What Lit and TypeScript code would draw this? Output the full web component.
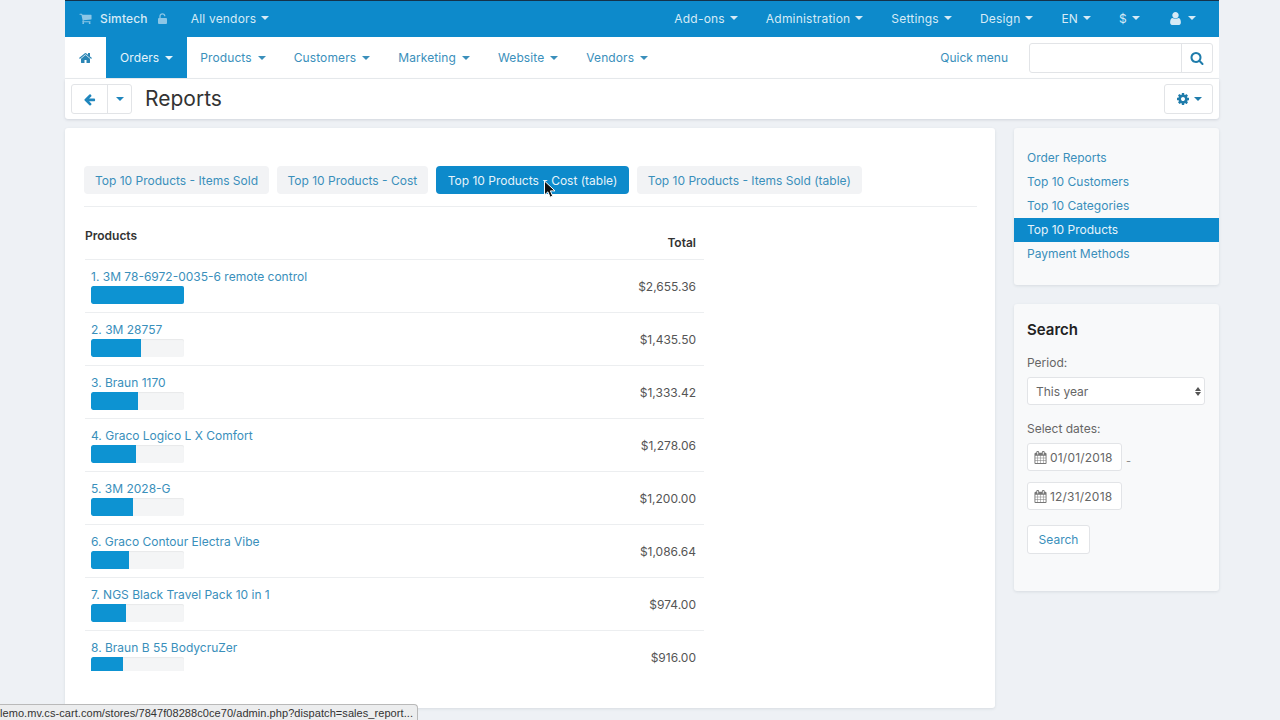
import { LitElement, html, css, svg } from "lit";
import { customElement } from "lit/decorators.js";

const ICONS: Record<string, string> = {
  home: "M1408 992v480q0 26-19 45t-45 19h-384v-384h-256v384h-384q-26 0-45-19t-19-45v-480q0-1 .5-3t.5-3l575-474 575 474q1 2 1 6zm223-69l-62 74q-8 9-21 11h-3q-13 0-21-7l-692-577-692 577q-12 8-24 7-13-2-21-11l-62-74q-8-10-7-23.5t11-21.5l719-599q32-26 76-26t76 26l244 204v-195q0-14 9-23t23-9h192q14 0 23 9t9 23v408l219 182q10 8 11 21.5t-7 23.5z",
  cart: "M704 1536q0 52-38 90t-90 38-90-38-38-90 38-90 90-38 90 38 38 90zm896 0q0 52-38 90t-90 38-90-38-38-90 38-90 90-38 90 38 38 90zm128-1088v512q0 24-16.5 42.5t-40.5 21.5l-1044 122q13 60 13 70 0 16-24 64h920q26 0 45 19t19 45-19 45-45 19h-1024q-26 0-45-19t-19-45q0-11 8-31.5t16-36 21.5-40 15.5-29.5l-177-823h-204q-26 0-45-19t-19-45 19-45 45-19h256q16 0 28.5 6.5t19.5 15.5 13 24.5 8 26 5.5 29.5 4.5 26h1201q26 0 45 19t19 45z",
  search: "M1216 832q0-185-131.5-316.5t-316.5-131.5-316.5 131.5-131.5 316.5 131.5 316.5 316.5 131.5 316.5-131.5 131.5-316.5zm512 832q0 52-38 90t-90 38q-54 0-90-38l-343-342q-179 124-399 124-143 0-273.5-55.5t-225-150-150-225-55.5-273.5 55.5-273.5 150-225 225-150 273.5-55.5 273.5 55.5 225 150 150 225 55.5 273.5q0 220-124 399l343 343q37 37 37 90z",
  user: "M1536 1399q0 109-62.5 187t-150.5 78h-854q-88 0-150.5-78t-62.5-187q0-85 8.5-160.5t31.5-152 58.5-131 94-89 134.5-34.5q131 128 313 128t313-128q76 0 134.5 34.5t94 89 58.5 131 31.5 152 8.5 160.5zm-256-887q0 159-112.5 271.5t-271.5 112.5-271.5-112.5-112.5-271.5 112.5-271.5 271.5-112.5 271.5 112.5 112.5 271.5z",
  back: "M1664 896v128q0 53-32.5 90.5t-84.5 37.5h-704l293 294q38 36 38 90t-38 90l-75 76q-37 37-90 37-52 0-91-37l-651-652q-37-37-37-90 0-52 37-91l651-650q38-38 91-38 52 0 90 38l75 74q38 38 38 91t-38 91l-293 293h704q52 0 84.5 37.5t32.5 90.5z",
  cog: "M1152 896q0-106-75-181t-181-75-181 75-75 181 75 181 181 75 181-75 75-181zm512-109v222q0 12-8 23t-20 13l-185 28q-19 54-39 91 35 50 107 138 10 12 10 25t-9 23q-27 37-99 108t-94 71q-12 0-26-9l-138-108q-44 23-91 38-16 136-29 186-7 28-36 28h-222q-14 0-24.5-8.5t-11.5-21.5l-28-184q-49-16-90-37l-141 107q-10 9-25 9-14 0-25-11-126-114-165-168-7-10-7-23 0-12 8-23 15-21 51-66.5t54-70.5q-27-50-41-99l-183-27q-13-2-21-12.5t-8-23.5v-222q0-12 8-23t19-13l186-28q14-46 39-92-40-57-107-138-10-12-10-24 0-10 9-23 26-36 98.5-107.5t94.5-71.5q13 0 26 10l138 107q44-23 91-38 16-136 29-186 7-28 36-28h222q14 0 24.5 8.5t11.5 21.5l28 184q49 16 90 37l142-107q9-9 24-9 13 0 25 10 129 119 165 170 7 8 7 22 0 12-8 23-15 21-51 66.5t-54 70.5q26 50 41 98l183 28q13 2 21 12.5t8 23.5z",
  calendar: "M192 1664h288v-288h-288v288zm352 0h320v-288h-320v288zm-352-352h288v-320h-288v320zm352 0h320v-320h-320v320zm-352-384h288v-288h-288v288zm736 736h320v-288h-320v288zm-384-736h320v-288h-320v288zm768 736h288v-288h-288v288zm-384-352h320v-320h-320v320zm-352-864v-288q0-13-9.5-22.5t-22.5-9.5h-64q-13 0-22.5 9.5t-9.5 22.5v288q0 13 9.5 22.5t22.5 9.5h64q13 0 22.5-9.5t9.5-22.5zm736 864h288v-320h-288v320zm-384-384h320v-288h-320v288zm384 0h288v-288h-288v288zm32-480v-288q0-13-9.5-22.5t-22.5-9.5h-64q-13 0-22.5 9.5t-9.5 22.5v288q0 13 9.5 22.5t22.5 9.5h64q13 0 22.5-9.5t9.5-22.5zm384-64v1280q0 52-38 90t-90 38h-1408q-52 0-90-38t-38-90v-1280q0-52 38-90t90-38h128v-96q0-66 47-113t113-47h64q66 0 113 47t47 113v96h384v-96q0-66 47-113t113-47h64q66 0 113 47t47 113v96h128q52 0 90 38t38 90z",
};

const icon = (name: string, size: number) => html`<svg
  class="ico"
  width=${size}
  height=${size}
  viewBox="0 0 1792 1792"
  fill="currentColor"
>${svg`<path d=${ICONS[name]}></path>`}</svg>`;

const TOP_RIGHT = ["Add-ons", "Administration", "Settings", "Design", "EN", "$"];
const NAV = ["Products", "Customers", "Marketing", "Website", "Vendors"];
const TABS = [
  { label: "Top 10 Products - Items Sold" },
  { label: "Top 10 Products - Cost" },
  { label: "Top 10 Products - Cost (table)", active: true },
  { label: "Top 10 Products - Items Sold (table)" },
];
const ROWS = [
  { name: "1. 3M 78-6972-0035-6 remote control", fill: 93, total: "$2,655.36" },
  { name: "2. 3M 28757", fill: 50, total: "$1,435.50" },
  { name: "3. Braun 1170", fill: 47, total: "$1,333.42" },
  { name: "4. Graco Logico L X Comfort", fill: 45, total: "$1,278.06" },
  { name: "5. 3M 2028-G", fill: 42, total: "$1,200.00" },
  { name: "6. Graco Contour Electra Vibe", fill: 38, total: "$1,086.64" },
  { name: "7. NGS Black Travel Pack 10 in 1", fill: 35, total: "$974.00" },
  { name: "8. Braun B 55 BodycruZer", fill: 32, total: "$916.00" },
];
const REPORTS = ["Order Reports", "Top 10 Customers", "Top 10 Categories", "Top 10 Products", "Payment Methods"];

@customElement("app-root")
export class AppRoot extends LitElement {
  static styles = css`
    :host {
      display: block;
      position: relative;
      height: 720px;
      overflow: hidden;
      background: #eef1f5;
      font-family: Inter, "Liberation Sans", sans-serif;
      font-size: 12px;
      color: #555;
    }
    * {
      box-sizing: border-box;
    }
    .ico {
      display: block;
      flex: none;
    }
    .caret {
      display: inline-block;
      flex: none;
      width: 0;
      height: 0;
      margin-left: 6px;
      border-left: 4px solid transparent;
      border-right: 4px solid transparent;
      border-top: 4px solid currentColor;
    }
    .page {
      width: 1154px;
      margin-left: 65px;
    }
    .top {
      display: flex;
      align-items: center;
      height: 37px;
      padding-bottom: 2px;
      background: #0d8acb;
      color: #d6eaf6;
      border-top: 1px solid #14324a;
    }
    .top .shop {
      display: flex;
      align-items: center;
      padding-left: 14px;
    }
    .top .cart {
      color: #8cc6e6;
      margin-right: 8px;
    }
    .top .lock {
      display: block;
      margin: 0 24px 0 10px;
      color: #8cc6e6;
    }
    .top .brand {
      font-weight: 500;
      letter-spacing: 0.15px;
    }
    .top .links {
      margin-left: auto;
      display: flex;
      align-items: center;
      gap: 28px;
      padding-right: 23px;
    }
    .top .link {
      display: flex;
      align-items: center;
      letter-spacing: 0.2px;
    }
    .top .link .caret {
      margin-left: 5px;
    }
    .nav {
      display: flex;
      align-items: stretch;
      height: 42px;
      background: #fff;
      color: #3a8fbb;
      border-bottom: 1px solid #e9ecef;
    }
    .nav .home {
      display: flex;
      align-items: center;
      justify-content: center;
      width: 41px;
      color: #2a85b5;
    }
    .nav .item {
      display: flex;
      align-items: center;
      padding: 0 15px 0 13px;
      height: 41px;
      letter-spacing: 0.1px;
    }
    .nav .item.on {
      background: #0d8acb;
      color: #e6f3fa;
      padding: 0 14px;
    }
    .nav .quick {
      margin-left: auto;
      display: flex;
      align-items: center;
      padding-right: 21px;
    }
    .nav .find {
      display: flex;
      align-self: center;
      height: 30px;
      margin-right: 6px;
      border: 1px solid #e2e4e7;
      border-radius: 3px;
      background: #fff;
    }
    .nav .find .box {
      width: 152px;
      border-right: 1px solid #e2e4e7;
    }
    .nav .find .go {
      width: 30px;
      display: flex;
      align-items: center;
      justify-content: center;
      color: #1f7cab;
    }
    .sub {
      display: flex;
      align-items: center;
      height: 40px;
      padding: 0 6px;
      background: #fff;
      border-radius: 0 0 3px 3px;
      box-shadow: 0 1px 3px rgba(60, 70, 90, 0.16);
    }
    .group {
      display: flex;
      height: 30px;
      border: 1px solid #e2e4e7;
      border-radius: 3px;
      color: #1f86bd;
      background: #fff;
    }
    .group > div {
      display: flex;
      align-items: center;
      justify-content: center;
    }
    .group .arrow {
      width: 36px;
      border-right: 1px solid #e2e4e7;
    }
    .group .more {
      width: 23px;
    }
    .group .more .caret {
      margin: 0;
    }
    .sub h1 {
      margin: 0 0 0 13px;
      font-size: 21px;
      line-height: 30px;
      font-weight: 400;
      color: #333;
    }
    .sub .tools {
      margin-left: auto;
      width: 49px;
      color: #1f7cab;
    }
    .tools .inner {
      width: 100%;
    }
    .tools .caret {
      margin-left: 4px;
    }
    .columns {
      display: grid;
      grid-template-columns: 930px 205px;
      gap: 19px;
      margin-top: 9px;
      align-items: start;
    }
    .main {
      height: 580px;
      padding: 38px 18px 0 19px;
      background: #fff;
      border-radius: 3px;
      box-shadow: 0 1px 3px rgba(60, 70, 90, 0.12);
    }
    .tabs {
      display: flex;
      gap: 7.5px;
      padding-bottom: 12px;
      border-bottom: 1px solid #eceef0;
    }
    .tab {
      height: 28px;
      padding: 0 11px;
      display: flex;
      align-items: center;
      background: #f2f3f5;
      color: #3a8fbb;
      border-radius: 4px;
      white-space: nowrap;
    }
    .tab.on {
      padding: 0 12px;
      background: #0d8acb;
      color: #e6f3fa;
    }
    .table {
      width: 619px;
      height: 464px;
      margin-left: 1px;
      overflow: hidden;
    }
    .head {
      display: flex;
      justify-content: space-between;
      height: 52px;
      padding: 21px 8px 0 0;
      font-weight: 600;
      color: #333;
    }
    .head .p {
      line-height: 16px;
    }
    .head .t {
      line-height: 16px;
      margin-top: 7px;
    }
    .row {
      display: flex;
      align-items: center;
      justify-content: space-between;
      height: 53px;
      padding: 0 8px 0 6px;
      border-top: 1px solid #eceef0;
    }
    .row .name {
      display: block;
      line-height: 18px;
      color: #3a8fbb;
    }
    .bar {
      width: 93px;
      height: 18px;
      background: #f4f5f6;
      border-radius: 2px;
      overflow: hidden;
      box-shadow: inset 0 1px 1px rgba(0, 0, 0, 0.05);
    }
    .bar .fill {
      height: 100%;
      background: #0d93d2;
      border-radius: 2px 0 0 2px;
    }
    .side {
      display: flex;
      flex-direction: column;
      gap: 19px;
    }
    .panel {
      background: #f8f9fa;
      border-radius: 3px;
      box-shadow: 0 1px 3px rgba(60, 70, 90, 0.12);
    }
    .panel.menu {
      height: 157px;
      padding-top: 18px;
    }
    .panel.menu .entry {
      height: 24px;
      line-height: 24px;
      padding-left: 13px;
      color: #3a8fbb;
    }
    .panel.menu .entry.on {
      background: #0d8acb;
      color: #e6f3fa;
    }
    .panel.form {
      height: 287px;
      padding: 17px 13px 0;
    }
    .panel h2 {
      margin: 0;
      font-size: 15px;
      line-height: 18px;
      font-weight: 600;
      color: #222;
    }
    .label {
      line-height: 16px;
      color: #666;
    }
    .label.period {
      margin-top: 16px;
    }
    .label.dates {
      margin-top: 16px;
    }
    .select {
      display: flex;
      align-items: center;
      justify-content: space-between;
      width: 178px;
      height: 28px;
      margin-top: 6px;
      padding: 0 3px 0 8px;
      background: #fff;
      border: 1px solid #e2e4e7;
      border-radius: 3px;
      color: #666;
    }
    .updown {
      display: flex;
      flex-direction: column;
      gap: 1px;
      color: #555;
    }
    .updown i {
      display: block;
      width: 0;
      height: 0;
      border-left: 3px solid transparent;
      border-right: 3px solid transparent;
    }
    .updown .u {
      border-bottom: 4px solid currentColor;
    }
    .updown .d {
      border-top: 4px solid currentColor;
    }
    .date-row {
      display: flex;
      align-items: flex-end;
      margin-top: 6px;
    }
    .date-row + .date-row {
      margin-top: 11px;
    }
    .date {
      display: flex;
      align-items: center;
      width: 95px;
      height: 28px;
      padding-left: 6px;
      gap: 3px;
      background: #fff;
      border: 1px solid #e2e4e7;
      border-radius: 3px;
      color: #666;
      letter-spacing: 0.2px;
    }
    .date .ico {
      color: #777;
    }
    .dash {
      margin: 0 0 3px 4px;
      font-size: 11px;
      line-height: 14px;
      color: #888;
    }
    .btn {
      display: flex;
      align-items: center;
      justify-content: center;
      width: 63px;
      height: 29px;
      margin-top: 15px;
      background: #fff;
      border: 1px solid #e2e4e7;
      border-radius: 3px;
      color: #3a8fbb;
    }
    .status {
      position: absolute;
      left: 0;
      bottom: 0;
      width: 418px;
      height: 16px;
      background: #ecedee;
      border: 1px solid #b9b9b9;
      border-left: 0;
      border-bottom: 0;
      border-radius: 0 4px 0 0;
      font-family: "Liberation Sans", sans-serif;
      font-size: 11px;
      letter-spacing: 0.065px;
      line-height: 16px;
      color: #333;
      white-space: nowrap;
      overflow: hidden;
    }
    .cursor {
      position: absolute;
      left: 543px;
      top: 180px;
    }
  `;

  render() {
    return html`
      <div class="page">
        <div class="top">
          <div class="shop">
            <span class="cart">${icon("cart", 13)}</span>
            <span class="brand">Simtech</span>
            <svg class="lock" width="9" height="11" viewBox="0 0 9 11">
              <path d="M2 5.5V3.2a2.4 2.4 0 0 1 4.8 0" fill="none" stroke="currentColor" stroke-width="1.3"></path>
              <rect x="0" y="5" width="9" height="6" rx="1" fill="currentColor"></rect>
            </svg>
            <span class="link">All vendors<i class="caret"></i></span>
          </div>
          <div class="links">
            ${TOP_RIGHT.map((t) => html`<span class="link">${t}<i class="caret"></i></span>`)}
            <span class="link">${icon("user", 15)}<i class="caret"></i></span>
          </div>
        </div>
        <div class="nav">
          <div class="home">${icon("home", 14)}</div>
          <div class="item on">Orders<i class="caret"></i></div>
          ${NAV.map((t) => html`<div class="item">${t}<i class="caret"></i></div>`)}
          <div class="quick">Quick menu</div>
          <div class="find">
            <div class="box"></div>
            <div class="go">${icon("search", 14)}</div>
          </div>
        </div>
        <div class="sub">
          <div class="group">
            <div class="arrow">${icon("back", 13)}</div>
            <div class="more"><i class="caret"></i></div>
          </div>
          <h1>Reports</h1>
          <div class="group tools">
            <div class="inner">${icon("cog", 14)}<i class="caret"></i></div>
          </div>
        </div>
        <div class="columns">
          <div class="main">
            <div class="tabs">
              ${TABS.map((t) => html`<div class="tab ${t.active ? "on" : ""}">${t.label}</div>`)}
            </div>
            <div class="table">
              <div class="head">
                <span class="p">Products</span>
                <span class="t">Total</span>
              </div>
              ${ROWS.map(
                (r) => html`<div class="row">
                  <div>
                    <span class="name">${r.name}</span>
                    <div class="bar"><div class="fill" style="width:${r.fill}px"></div></div>
                  </div>
                  <span class="total">${r.total}</span>
                </div>`
              )}
            </div>
          </div>
          <div class="side">
            <div class="panel menu">
              ${REPORTS.map(
                (t) => html`<div class="entry ${t === "Top 10 Products" ? "on" : ""}">${t}</div>`
              )}
            </div>
            <div class="panel form">
              <h2>Search</h2>
              <div class="label period">Period:</div>
              <div class="select">
                This year
                <span class="updown"><i class="u"></i><i class="d"></i></span>
              </div>
              <div class="label dates">Select dates:</div>
              <div class="date-row">
                <div class="date">${icon("calendar", 13)}01/01/2018</div>
                <span class="dash">-</span>
              </div>
              <div class="date-row">
                <div class="date">${icon("calendar", 13)}12/31/2018</div>
              </div>
              <div class="btn">Search</div>
            </div>
          </div>
        </div>
      </div>
      <svg class="cursor" width="13" height="19" viewBox="0 0 13 19">
        <path d="M1.5 1v14l3.4-3.2 2.2 5.4 2.6-1.1-2.3-5.2h4.6z" fill="#111" stroke="#fff" stroke-width="1"></path>
      </svg>
      <div class="status">lemo.mv.cs-cart.com/stores/7847f08288c0ce70/admin.php?dispatch=sales_report...</div>
    `;
  }
}
